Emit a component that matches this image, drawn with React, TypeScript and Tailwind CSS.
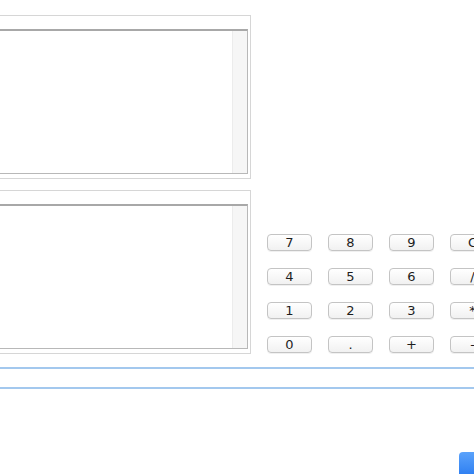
const keys = [
  ["7", "8", "9", "C"],
  ["4", "5", "6", "/"],
  ["1", "2", "3", "*"],
  ["0", ".", "+", "-"],
]

function Panel({ top }: { top: string }) {
  return (
    <div className={`h-[164px] w-[251px] border border-l-0 border-[#d6d6d6] bg-white pr-[2px] pb-[4px] ${top}`}>
      <div className="flex h-full w-full border-t-2 border-r border-b border-t-[#a8a8a8] border-r-[#b8b8b8] border-b-[#b8b8b8] bg-white">
        <div className="flex-1" />
        <div className="w-[15px] border-l border-[#ececec] bg-[#f6f6f6]" />
      </div>
    </div>
  )
}

export default function App() {
  return (
    <div className="relative h-[474px] w-[474px] overflow-hidden bg-white font-['DejaVu_Sans',sans-serif]">
      <div className="flex pt-[15px]">
        <div className="flex w-[251px] shrink-0 flex-col gap-[11px]">
          <Panel top="pt-[13px]" />
          <Panel top="pt-[13px]" />
        </div>
        <div className="ml-[16px] mt-[219px] grid shrink-0 grid-cols-[repeat(4,45px)] gap-x-[16px] gap-y-[15.5px]">
          {keys.flat().map((k) => (
            <div
              key={k}
              className="flex h-[17px] w-[45px] items-center justify-center rounded-[4px] border border-[#c4c4c4] bg-gradient-to-b from-white to-[#f1f1f1] text-[13px] leading-none text-[#1e1e1e] shadow-[0_1px_0_rgba(0,0,0,0.06)]"
            >
              {k}
            </div>
          ))}
        </div>
      </div>
      <div className="mt-[13px] h-[22px] w-full border-y-2 border-[#a3c8ee] bg-white" />
      <div className="flex justify-end pt-[63px]">
        <div className="mr-[-20px] h-[30px] w-[35px] rounded-[4px] bg-gradient-to-b from-[#5aa2fb] to-[#1f74ee]" />
      </div>
    </div>
  )
}
